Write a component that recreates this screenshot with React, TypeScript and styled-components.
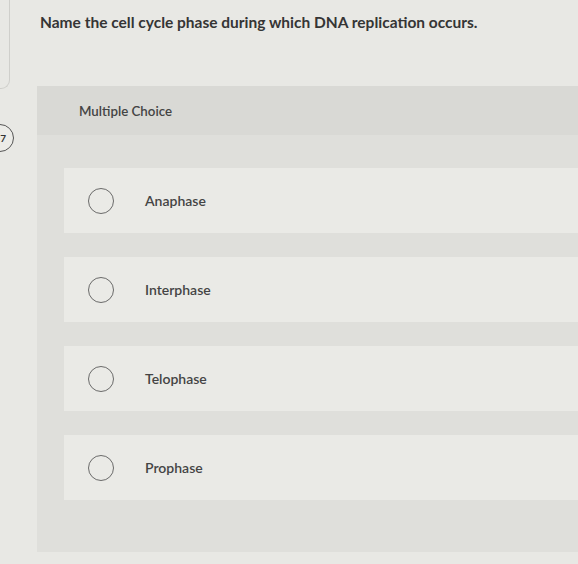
import styled, { createGlobalStyle } from "styled-components";

const GlobalStyle = createGlobalStyle`
  html, body {
    margin: 0;
    padding: 0;
    background-color: #e8e8e4;
    font-family: "Lato", "Open Sans", sans-serif;
    overflow: hidden;
  }
`;

const Page = styled.div`
  display: flex;
  width: 578px;
  height: 564px;
  overflow: hidden;
`;

const Rail = styled.aside`
  width: 37px;
  flex-shrink: 0;
  display: flex;
  flex-direction: column;
`;

const SidePanel = styled.div`
  width: 10px;
  height: 89px;
  box-sizing: border-box;
  border-right: 1px solid #cfcfcb;
  border-bottom: 1px solid #cfcfcb;
  border-bottom-right-radius: 9px;
`;

const NumberBadge = styled.div`
  width: 28px;
  height: 28px;
  margin: 35px 0 0 -14px;
  box-sizing: border-box;
  border: 1.5px solid #555;
  border-radius: 50%;
  background: #ececE8;
  display: flex;
  align-items: center;
  justify-content: flex-end;
  padding-right: 7px;
  font-size: 10px;
  font-weight: 700;
  color: #333;
`;

const Main = styled.main`
  flex: 1;
  display: flex;
  flex-direction: column;
`;

const Question = styled.h1`
  margin: 0;
  height: 86px;
  padding: 13px 0 0 3px;
  box-sizing: border-box;
  font-size: 15.5px;
  font-weight: 700;
  color: #353535;
`;

const Card = styled.section`
  height: 466px;
  background-color: #dfdfdb;
  display: flex;
  flex-direction: column;
`;

const CardHeader = styled.div`
  height: 49px;
  padding-left: 42px;
  display: flex;
  align-items: center;
  background-color: #d9d9d5;
  font-size: 13.3px;
  font-weight: 600;
  color: #444;
`;

const OptionList = styled.div`
  display: flex;
  flex-direction: column;
  gap: 24px;
  padding: 33px 0 0 27px;
`;

const Option = styled.label`
  height: 65px;
  display: flex;
  align-items: center;
  gap: 31px;
  padding-left: 24px;
  background-color: #eaeae6;
  font-size: 14px;
  font-weight: 600;
  color: #444;
`;

const Radio = styled.span`
  width: 26px;
  height: 26px;
  box-sizing: border-box;
  border: 1.5px solid #6a6a6a;
  border-radius: 50%;
  flex-shrink: 0;
`;

const choices = ["Anaphase", "Interphase", "Telophase", "Prophase"];

const App = () => {
  return (
    <>
      <GlobalStyle />
      <Page>
        <Rail>
          <SidePanel />
          <NumberBadge>7</NumberBadge>
        </Rail>
        <Main>
          <Question>Name the cell cycle phase during which DNA replication occurs.</Question>
          <Card>
            <CardHeader>Multiple Choice</CardHeader>
            <OptionList>
              {choices.map((choice) => (
                <Option key={choice}>
                  <Radio />
                  {choice}
                </Option>
              ))}
            </OptionList>
          </Card>
        </Main>
      </Page>
    </>
  );
};

export default App;
